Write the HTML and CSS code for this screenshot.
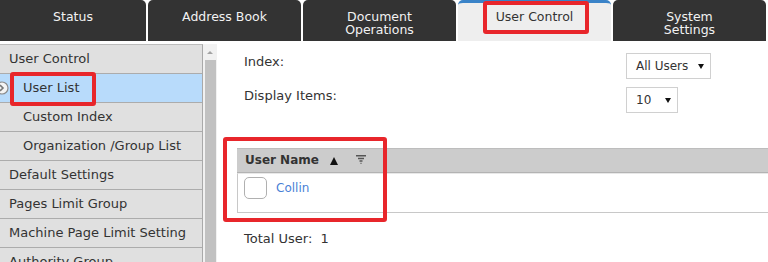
FILE: index.html
```html
<!DOCTYPE html>
<html lang="en">
<head>
    <meta charset="UTF-8">
    <meta name="viewport" content="width=device-width, initial-scale=1.0">
    <title>User Control - User List</title>
    <link rel="stylesheet" href="styles.css">
</head>
<body>
    <div class="tabs">
        <div class="tab tab-first">Status</div>
        <div class="tab">Address Book</div>
        <div class="tab">Document<br>Operations</div>
        <div class="tab active">User Control<span class="mark mark-tab"></span></div>
        <div class="tab">System<br>Settings</div>
    </div>

    <div class="page">
        <ul class="menu">
            <li class="menu-item">User Control</li>
            <li class="menu-item sub selected">
                <svg class="current" width="10" height="14" viewBox="0 0 10 14">
                    <circle cx="2" cy="7" r="6" fill="#f4f4f4" stroke="#8c8c8c" stroke-width="1.2"/>
                    <path d="M0 4 L3 7 L0 10" fill="none" stroke="#777" stroke-width="1.6"/>
                </svg>
                User List
                <span class="mark mark-menu"></span>
            </li>
            <li class="menu-item sub">Custom Index</li>
            <li class="menu-item sub">Organization /Group List</li>
            <li class="menu-item">Default Settings</li>
            <li class="menu-item">Pages Limit Group</li>
            <li class="menu-item">Machine Page Limit Setting</li>
            <li class="menu-item">Authority Group</li>
        </ul>

        <div class="scroll">
            <span class="scroll-up"></span>
            <div class="thumb"></div>
        </div>

        <div class="content">
            <div class="filters">
                <div class="label">Index:</div>
                <div class="select select-index">All Users<span class="caret"></span></div>
                <div class="label">Display Items:</div>
                <div class="select select-count">10<span class="caret"></span></div>
            </div>

            <div class="list">
                <span class="mark mark-list"></span>
                <div class="list-head">
                    User Name
                    <svg class="sort" width="8" height="8" viewBox="0 0 8 8"><path d="M0 8 L4 0 L8 8 Z" fill="#111"/></svg>
                    <svg class="filter" width="10" height="9" viewBox="0 0 10 9">
                        <path d="M0 0.75 H10 M2 3.5 H8 M3.5 6 H6.5 M4.5 8.3 H5.5" stroke="#555" stroke-width="1.3"/>
                    </svg>
                </div>
                <div class="list-row">
                    <span class="check"></span>
                    <a class="user" href="#">Collin</a>
                </div>
            </div>

            <div class="total">Total User:&nbsp; 1</div>
        </div>
    </div>
</body>
</html>
```

FILE: styles.css
```css
body {
    margin: 0;
    width: 768px;
    height: 262px;
    overflow: hidden;
    background-color: #fff;
    color: #333;
    font-family: "DejaVu Sans", Verdana, sans-serif;
}

.tabs {
    display: flex;
    gap: 2px;
    height: 41px;
    margin-bottom: 3px;
}

.tab {
    width: 153px;
    box-sizing: border-box;
    padding-top: 11px;
    background-color: #333;
    color: #f2f2f2;
    font-size: 12.5px;
    line-height: 12.5px;
    text-align: center;
    border-radius: 5px 5px 0 0;
    position: relative;
}

.tab-first {
    width: 146px;
    border-top-left-radius: 0;
}

.tab.active {
    background-color: #eee;
    color: #333;
    border-top: 3px solid #3a83c8;
    padding-top: 8px;
}

.mark {
    position: absolute;
    border: 4px solid #e8262b;
    border-radius: 3px;
    box-sizing: border-box;
}

.mark-tab {
    left: 25px;
    top: -2px;
    width: 106px;
    height: 33px;
}

.page {
    display: flex;
    height: 218px;
    overflow: hidden;
}

.menu {
    list-style: none;
    margin: 0;
    padding: 0;
    width: 202px;
    border-top: 1px solid #bcbcbc;
    border-right: 1px solid #a9a9a9;
    background-color: #e0e0e0;
    font-size: 13px;
}

.menu-item {
    height: 28px;
    line-height: 28px;
    padding-left: 9px;
    border-bottom: 1px solid #acacac;
    white-space: nowrap;
    position: relative;
}

.menu-item.sub {
    padding-left: 23px;
}

.menu-item.selected {
    background-color: #b8dbfb;
}

.current {
    position: absolute;
    left: 0;
    top: 7px;
}

.mark-menu {
    left: 10px;
    top: -2px;
    width: 86px;
    height: 34px;
}

.scroll {
    width: 14px;
    background-color: #f1f1f1;
    display: flex;
    flex-direction: column;
    align-items: center;
}

.scroll-up {
    margin-top: 7px;
    width: 0;
    height: 0;
    border-left: 3px solid transparent;
    border-right: 3px solid transparent;
    border-bottom: 3px solid #a3a3a3;
}

.thumb {
    margin-top: 6px;
    width: 11px;
    flex: 1;
    background-color: #c1c1c1;
}

.content {
    flex: 1;
    padding: 9px 0 0 20px;
    font-size: 13px;
}

.filters {
    display: grid;
    grid-template-columns: 382px auto;
    row-gap: 8px;
    padding-left: 7px;
    align-items: start;
}

.label {
    line-height: 18px;
}

.select {
    position: relative;
    box-sizing: border-box;
    height: 26px;
    line-height: 24px;
    padding-left: 9px;
    border: 1px solid #d0d0d0;
    font-size: 12px;
    color: #333;
}

.select-index {
    width: 85px;
}

.select-count {
    width: 52px;
}

.caret {
    position: absolute;
    right: 6px;
    top: 10px;
    width: 0;
    height: 0;
    border-left: 3px solid transparent;
    border-right: 3px solid transparent;
    border-top: 5px solid #111;
}

.list {
    position: relative;
    margin-top: 35px;
}

.mark-list {
    left: -14px;
    top: -11px;
    width: 164px;
    height: 85px;
}

.list-head {
    height: 23px;
    line-height: 23px;
    padding-left: 8px;
    background-color: #ccc;
    border-top: 1px solid #bdbdbd;
    border-bottom: 1px solid #b3b3b3;
    font-size: 12px;
    font-weight: bold;
    color: #333;
}

.sort {
    margin-left: 7px;
    vertical-align: -1px;
}

.filter {
    margin-left: 14px;
    vertical-align: 0;
}

.list-row {
    display: flex;
    align-items: flex-start;
    height: 35px;
    padding: 3px 0 0 6px;
    border-top: 1px solid #e8e8e8;
    border-left: 1px solid #c8c8c8;
    border-bottom: 1px solid #c8c8c8;
}

.check {
    width: 21px;
    height: 20px;
    border: 1px solid #b0b0b0;
    border-radius: 5px;
    background-color: #fff;
}

.user {
    margin-left: 9px;
    line-height: 22px;
    font-size: 12px;
    color: #4a7fd6;
    text-decoration: none;
}

.total {
    margin-top: 17px;
    padding-left: 7px;
    line-height: 18px;
}
```
